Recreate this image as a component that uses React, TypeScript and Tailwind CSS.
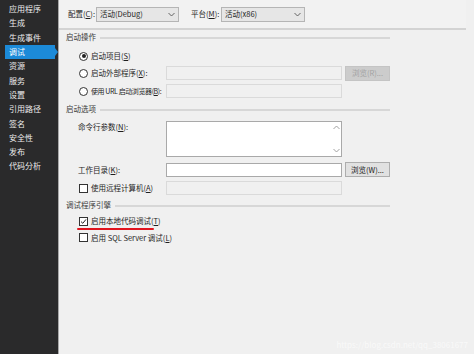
const font = { fontFamily: '"Noto Sans CJK SC", "Microsoft YaHei", "Noto Sans", sans-serif' }

const navItems = ['应用程序', '生成', '生成事件', '调试', '资源', '服务', '设置', '引用路径', '签名', '安全性', '发布', '代码分析']

function Chevron({ className = '' }: { className?: string }) {
  return (
    <svg width="7" height="5" viewBox="0 0 7 5" className={className}>
      <path d="M0.5 1 L3.5 4 L6.5 1" fill="none" stroke="#555" strokeWidth="0.9" />
    </svg>
  )
}

function Select({ value, width }: { value: string; width: string }) {
  return (
    <div className={`${width} h-[15px] flex items-center justify-between border border-[#b5b5b5] bg-[#e6e6e6] pl-[3px] pr-[3px]`}>
      <span>{value}</span>
      <Chevron />
    </div>
  )
}

function Header({ title }: { title: string }) {
  return (
    <div className="h-[12px] flex items-center gap-[4px] text-[#3a3a3a]">
      <span>{title}</span>
      <div className="flex-1 h-[2px] bg-[#d7d7d7] mt-[1px]" />
    </div>
  )
}

function Radio({ checked }: { checked?: boolean }) {
  return (
    <div className="w-[9px] h-[9px] shrink-0 rounded-full border border-[#333] bg-white flex items-center justify-center">
      {checked && <div className="w-[4px] h-[4px] rounded-full bg-[#222]" />}
    </div>
  )
}

function Check({ checked }: { checked?: boolean }) {
  return (
    <div className="w-[9px] h-[9px] shrink-0 border border-[#333] bg-white flex items-center justify-center">
      {checked && (
        <svg width="7" height="7" viewBox="0 0 7 7">
          <path d="M1 3.6 L2.8 5.3 L6 1.4" fill="none" stroke="#222" strokeWidth="1" />
        </svg>
      )}
    </div>
  )
}

function Input({ disabled, className = '' }: { disabled?: boolean; className?: string }) {
  return (
    <div
      className={`w-[176px] shrink-0 ${disabled ? 'border-[#dadada] bg-[#f0f0f0]' : 'border-[#a9a9a9] bg-white'} border ${className}`}
    />
  )
}

function Button({ label, disabled }: { label: string; disabled?: boolean }) {
  return (
    <div
      className={`w-[45px] h-[15px] shrink-0 ml-[3px] flex items-center justify-center border ${
        disabled ? 'border-[#c4c4c4] bg-[#cccccc] text-[#a3a3a3]' : 'border-[#adadad] bg-[#e1e1e1] text-[#222]'
      }`}
    >
      {label}
    </div>
  )
}

export default function App() {
  return (
    <div className="w-[474px] h-[354px] flex overflow-hidden text-[7.5px] leading-none whitespace-nowrap text-[#1e1e1e]" style={font}>
      <div className="w-[58px] shrink-0 h-full bg-[#2a2a2b] pt-[2px] text-[8px] text-[#ececec]">
        {navItems.map((item) => (
          <div key={item} className="h-[14.3px] flex items-center">
            {item === '调试' ? (
              <>
                <div className="ml-[5px] w-[50px] h-[14px] bg-[#1c8ad8] flex items-center pl-[4px] text-white">{item}</div>
                <div className="w-0 h-0 border-y-[4px] border-y-transparent border-l-[3px] border-l-[#1c8ad8]" />
              </>
            ) : (
              <span className="pl-[9px]">{item}</span>
            )}
          </div>
        ))}
      </div>
      <div className="w-[1px] shrink-0 h-full bg-[#a8a8a8]" />
      <div className="flex-1 h-full bg-[#f0f0f0] relative">
        <div className="h-[30px] mr-[8px] flex items-center pl-[9px] border-b-[2px] border-[#d3d3d3] bg-[#f2f2f2]">
          <span className="w-[28px]">配置(<u>C</u>):</span>
          <Select value="活动(Debug)" width="w-[83px]" />
          <span className="ml-[12px] w-[30px]">平台(<u>M</u>):</span>
          <Select value="活动(x86)" width="w-[84px]" />
        </div>

        <div className="ml-[7px] w-[324px] mt-[1px]">
          <Header title="启动操作" />
          <div className="h-[14px] mt-[6px] flex items-center pl-[13px] gap-[3px]">
            <Radio checked />
            <span>启动项目(<u>S</u>)</span>
          </div>
          <div className="h-[14px] mt-[3px] flex items-center pl-[13px]">
            <Radio />
            <span className="ml-[3px] w-[75px]">启动外部程序(<u>X</u>):</span>
            <Input disabled className="h-[14px]" />
            <Button label="浏览(R)..." disabled />
          </div>
          <div className="h-[14px] mt-[4px] flex items-center pl-[13px]">
            <Radio />
            <span className="ml-[3px] w-[75px] text-[7px] tracking-[-0.4px]">使用 URL 启动浏览器(<u>B</u>):</span>
            <Input disabled className="h-[14px]" />
          </div>

          <div className="mt-[5px]">
            <Header title="启动选项" />
          </div>
          <div className="mt-[6px] flex pl-[12px]">
            <span className="w-[88px] pt-[2px]">命令行参数(<u>N</u>):</span>
            <div className="w-[176px] h-[36px] border border-[#a9a9a9] bg-white flex justify-end">
              <div className="w-[9px] flex flex-col items-center justify-between py-[3px]">
                <Chevron className="rotate-180 opacity-60" />
                <Chevron className="opacity-60" />
              </div>
            </div>
          </div>
          <div className="h-[15px] mt-[5px] flex items-center pl-[12px]">
            <span className="w-[88px]">工作目录(<u>K</u>):</span>
            <Input className="h-[14px]" />
            <Button label="浏览(W)..." />
          </div>
          <div className="h-[14px] mt-[4px] flex items-center pl-[13px]">
            <Check />
            <span className="ml-[3px] w-[75px]">使用远程计算机(<u>A</u>)</span>
            <Input disabled className="h-[14px]" />
          </div>

          <div className="mt-[4px]">
            <Header title="调试程序引擎" />
          </div>
          <div className="h-[14px] mt-[3px] flex items-center pl-[13px] gap-[3px]">
            <Check checked />
            <span>启用本地代码调试(<u>T</u>)</span>
          </div>
          <div className="ml-[11px] w-[77px] h-[1.5px] bg-[#e0141e] rounded-full" />
          <div className="h-[14px] mt-[1px] flex items-center pl-[13px] gap-[3px]">
            <Check />
            <span>启用 SQL Server 调试(<u>L</u>)</span>
          </div>
        </div>

        <div className="absolute right-[6px] bottom-[5px] text-[8px] text-[#f9f9f9]">https://blog.csdn.net/qq_38061677</div>
      </div>
    </div>
  )
}
